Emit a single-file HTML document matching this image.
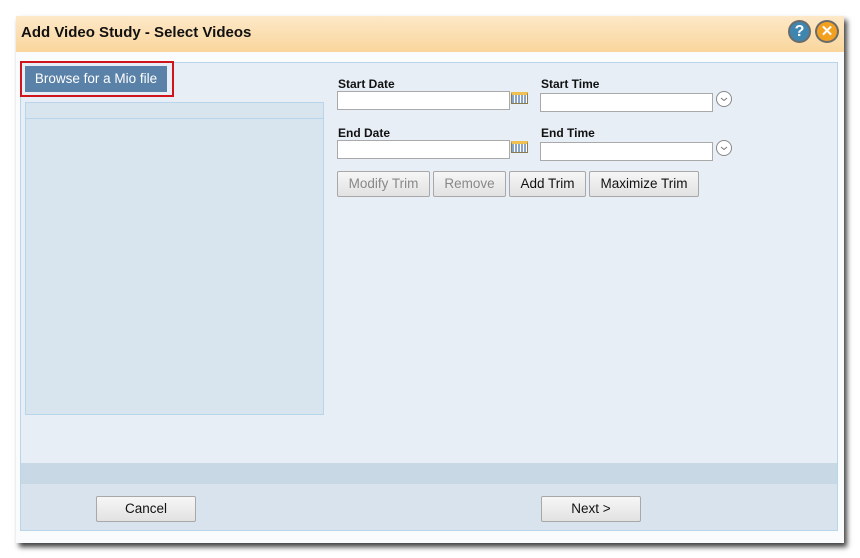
<!DOCTYPE html>
<html><head><style>
body{margin:0;width:860px;height:558px;background:#fff;font-family:"Liberation Sans",Arial,sans-serif;position:relative;overflow:hidden}
.a{position:absolute;box-sizing:border-box}
.dlg{left:16px;top:16px;width:828px;height:527px;background:#fafbfc;box-shadow:3px 4px 5px rgba(0,0,0,.75)}
.title{left:16px;top:16px;width:828px;height:36px;background:linear-gradient(#fde8c8,#f9d69c);font-weight:bold;font-size:15px;padding:8px 0 0 5px;color:#111}
.inp{height:19px;background:#fff;border:1px solid #a9a9a9}
.lbl{font-size:12px;font-weight:bold;color:#111}
.btn{height:26px;border:1px solid #a8a8a8;border-radius:2px;background:linear-gradient(#f6f6f6,#e2e2e2);font-size:13.5px;text-align:center;line-height:24px;color:#111}
.dis{color:#888}
.cal{width:17px;height:12px;border:1px solid #8a7a50;background:repeating-linear-gradient(90deg,#8aa4c8 0 2px,#fff 2px 3px);border-top:3px solid #f0c050}
</style></head><body>
<div class="a dlg"></div>
<div class="a title">Add Video Study - Select Videos</div>
<div class="a" style="left:788px;top:20px;width:23px;height:23px;border-radius:50%;background:#3e86b0;border:2px solid #6b6b6b;color:#fff;font-weight:bold;font-size:16px;text-align:center;line-height:19px">?</div>
<div class="a" style="left:815px;top:20px;width:24px;height:23px;border-radius:50%;background:#f2a020;border:2px solid #6b6b6b;color:#fff;font-weight:bold;font-size:15px;text-align:center;line-height:19px">✕</div>
<div class="a" style="left:20px;top:62px;width:818px;height:469px;background:#e8eef6;border:1px solid #b9d5ec"></div>
<div class="a" style="left:21px;top:463px;width:816px;height:21px;background:#c8d8e4"></div>
<div class="a" style="left:21px;top:484px;width:816px;height:46px;background:#d8e3ed"></div>
<div class="a" style="left:20px;top:61px;width:154px;height:36px;border:2px solid #d0141c"></div>
<div class="a" style="left:25px;top:66px;width:142px;height:26px;background:#5a82a8;color:#fff;font-size:13.5px;text-align:center;line-height:26px">Browse for a Mio file</div>
<div class="a" style="left:25px;top:102px;width:299px;height:313px;background:#d8e4ee;border:1px solid #b9d5ec"></div>
<div class="a" style="left:26px;top:118px;width:297px;height:1px;background:#b9d5ec"></div>
<div class="a lbl" style="left:338px;top:77px">Start Date</div>
<div class="a inp" style="left:337px;top:91px;width:173px"></div>
<div class="a cal" style="left:511px;top:92px"></div>
<div class="a lbl" style="left:541px;top:77px">Start Time</div>
<div class="a inp" style="left:540px;top:93px;width:173px"></div>
<svg class="a" style="left:715px;top:90px" width="18" height="18"><circle cx="9" cy="9" r="7.5" fill="#fff" stroke="#888"/><path d="M6 8l3 2.5L12 8" fill="none" stroke="#777" stroke-width="1"/></svg>
<div class="a lbl" style="left:338px;top:126px">End Date</div>
<div class="a inp" style="left:337px;top:140px;width:173px"></div>
<div class="a cal" style="left:511px;top:141px"></div>
<div class="a lbl" style="left:541px;top:126px">End Time</div>
<div class="a inp" style="left:540px;top:142px;width:173px"></div>
<svg class="a" style="left:715px;top:139px" width="18" height="18"><circle cx="9" cy="9" r="7.5" fill="#fff" stroke="#888"/><path d="M6 8l3 2.5L12 8" fill="none" stroke="#777" stroke-width="1"/></svg>
<div class="a btn dis" style="left:337px;top:171px;width:93px">Modify Trim</div>
<div class="a btn dis" style="left:433px;top:171px;width:73px">Remove</div>
<div class="a btn" style="left:509px;top:171px;width:77px">Add Trim</div>
<div class="a btn" style="left:589px;top:171px;width:110px">Maximize Trim</div>
<div class="a btn" style="left:96px;top:496px;width:100px">Cancel</div>
<div class="a btn" style="left:541px;top:496px;width:100px">Next &gt;</div>
</body></html>
